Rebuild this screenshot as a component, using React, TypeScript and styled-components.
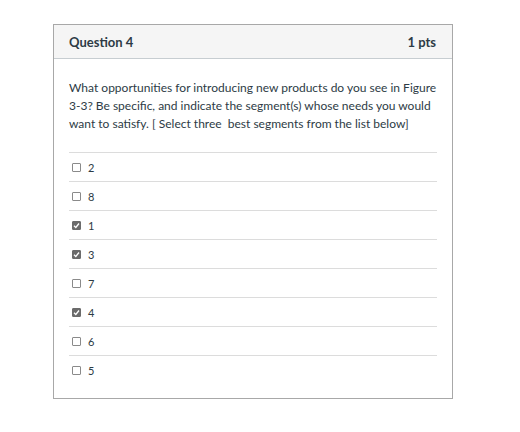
import React from 'react'
import styled, { createGlobalStyle } from 'styled-components'

const GlobalStyle = createGlobalStyle`
  body {
    margin: 0;
    background: #ffffff;
    font-family: Lato, 'Open Sans', sans-serif;
    color: #2d3b45;
  }
`

const Page = styled.div`
  padding: 24px 0 0 53px;
`

const Card = styled.div`
  width: 398px;
  border: 1px solid #a8a8a8;
`

const Header = styled.div`
  height: 33px;
  background: #f5f5f5;
  border-bottom: 1px solid #c7cdd1;
  padding: 0 16px 0 15px;
  display: flex;
  align-items: center;
  justify-content: space-between;
  font-size: 13px;
  font-weight: 700;
`

const Body = styled.div`
  padding: 20px 15px 14px 15px;
`

const QuestionText = styled.p`
  margin: 0 0 19px;
  font-size: 12px;
  line-height: 18px;
`

const OptionRow = styled.div`
  height: 28px;
  border-top: 1px solid #dcdcdc;
  display: flex;
  align-items: center;
  gap: 7px;
  padding-left: 3px;
  font-size: 11px;
`

const Box = styled.span<{ $checked: boolean }>`
  width: 9px;
  height: 9px;
  box-sizing: border-box;
  border: 1px solid ${p => (p.$checked ? '#6b6b6b' : '#8a8a8a')};
  background: ${p => (p.$checked ? '#6b6b6b' : '#fff')};
  border-radius: 1px;
  display: flex;
  align-items: center;
  justify-content: center;
`

const options = [
  { label: '2', checked: false },
  { label: '8', checked: false },
  { label: '1', checked: true },
  { label: '3', checked: true },
  { label: '7', checked: false },
  { label: '4', checked: true },
  { label: '6', checked: false },
  { label: '5', checked: false },
]

export default function App() {
  return (
    <>
      <GlobalStyle />
      <Page>
        <Card>
          <Header>
            <span>Question 4</span>
            <span>1 pts</span>
          </Header>
          <Body>
            <QuestionText>
              What opportunities for introducing new products do you see in Figure
              3-3? Be specific, and indicate the segment(s) whose needs you would
              want to satisfy. [ Select three&nbsp; best segments from the list below]
            </QuestionText>
            {options.map(o => (
              <OptionRow key={o.label}>
                <Box $checked={o.checked}>
                  {o.checked && (
                    <svg width="7" height="7" viewBox="0 0 7 7">
                      <path d="M1 3.8 L2.8 5.5 L6 1.5" stroke="#fff" strokeWidth="1.3" fill="none" />
                    </svg>
                  )}
                </Box>
                <span>{o.label}</span>
              </OptionRow>
            ))}
          </Body>
        </Card>
      </Page>
    </>
  )
}
